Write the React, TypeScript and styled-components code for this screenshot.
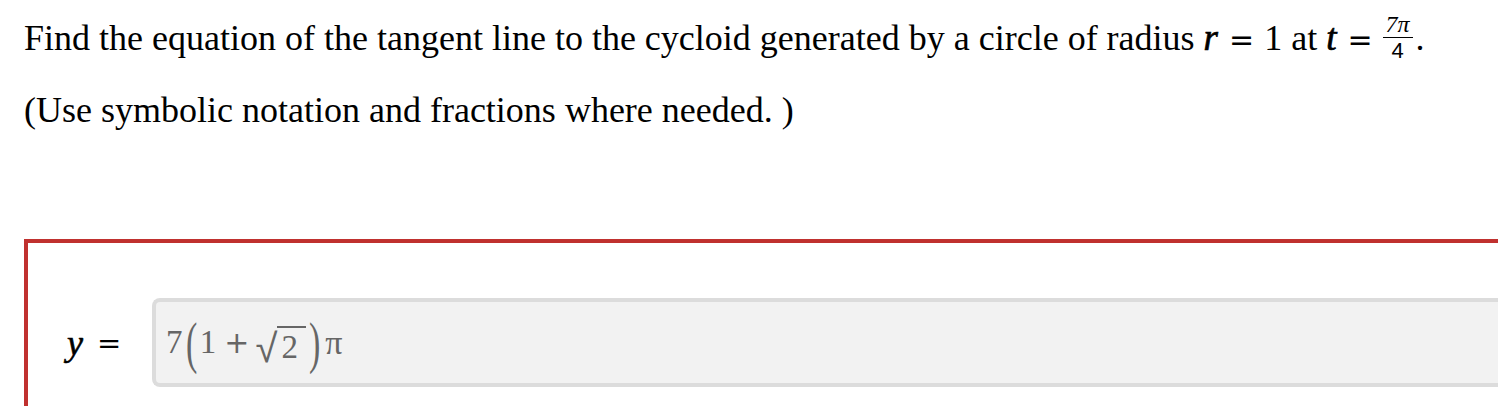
import React from 'react'
import styled, { createGlobalStyle } from 'styled-components'

const GlobalStyle = createGlobalStyle`
  html, body {
    margin: 0;
    padding: 0;
    background: #fff;
  }
  body {
    width: 1498px;
    height: 406px;
    overflow: hidden;
  }
`

const Page = styled.div`
  padding: 13px 0 0 24px;
  font-family: "Liberation Serif", "Times New Roman", serif;
  color: #000;
`

const Prompt = styled.p`
  margin: 0;
  font-size: 36px;
  line-height: 50px;
  white-space: nowrap;
`

const Hint = styled(Prompt)`
  margin-top: 20px;
`

const MathVar = styled.i`
  font-family: "Liberation Serif", serif;
  font-size: 37px;
  -webkit-text-stroke: 0.7px #000;
  margin-right: 2px;
`

const Eq = styled.span`
  font-family: "DejaVu Sans", sans-serif;
  font-size: 30px;
  margin: 0 10px 0 9px;
`

const Frac = styled.span`
  display: inline-flex;
  flex-direction: column;
  align-items: center;
  vertical-align: middle;
  font-family: "Liberation Sans", Arial, sans-serif;
  font-size: 22px;
  line-height: 20px;
  margin: -8px 3px 0 0;
`

const Num = styled.span`
  padding: 0 3px 3px;
  border-bottom: 1.5px solid #000;
  font-family: "Liberation Serif", serif;
  font-style: italic;
  font-size: 24px;
`

const Den = styled.span`
  padding-top: 3px;
`

const AnswerPanel = styled.section`
  margin-top: 104px;
  border-top: 4px solid #c0312f;
  border-left: 4px solid #c0312f;
  height: 169px;
  padding: 55px 0 0 37px;
  box-sizing: border-box;
`

const Row = styled.div`
  display: flex;
  align-items: center;
`

const Label = styled.span`
  display: flex;
  align-items: center;
  width: 87px;
  padding-left: 2px;
  box-sizing: border-box;
`

const LabelVar = styled.i`
  font-family: "Liberation Serif", serif;
  font-size: 36px;
  -webkit-text-stroke: 0.6px #000;
`

const LabelEq = styled.span`
  font-family: "DejaVu Sans", sans-serif;
  font-size: 29px;
  margin-left: 14px;
`

const InputBox = styled.div`
  flex: 1;
  height: 89px;
  box-sizing: border-box;
  border: 4px solid #dcdcdc;
  border-right: none;
  border-radius: 8px 0 0 8px;
  background: #f2f2f2;
  display: flex;
  align-items: center;
  padding-left: 10px;
  color: #666;
  font-family: "Liberation Serif", serif;
  font-size: 33px;
`

const Paren = styled.span`
  display: inline-block;
  font-family: "Liberation Serif", serif;
  font-size: 40px;
  transform: scaleY(1.45) scaleX(0.85);
  margin: 0 2px;
`

const Plus = styled.span`
  font-family: "DejaVu Sans", sans-serif;
  font-size: 30px;
  margin: 0 6px 0 8px;
`

const Radical = styled.span`
  display: inline-flex;
  align-items: flex-end;
`

const RadSign = styled.span`
  font-family: "DejaVu Sans", sans-serif;
  font-size: 40px;
  font-weight: 300;
  transform: translateY(5px);
`

const Radicand = styled.span`
  border-top: 2px solid #666;
  padding: 0 8px 0 4px;
  line-height: 38px;
`

const Pi = styled.span`
  font-family: "Liberation Serif", serif;
  font-size: 34px;
  margin-left: 2px;
`

export default function App() {
  return (
    <>
      <GlobalStyle />
      <Page>
        <Prompt>
          Find the equation of the tangent line to the cycloid generated by a circle of radius{' '}
          <MathVar>r</MathVar>
          <Eq>=</Eq>1 at <MathVar>t</MathVar>
          <Eq>=</Eq>
          <Frac>
            <Num>7π</Num>
            <Den>4</Den>
          </Frac>
          .
        </Prompt>
        <Hint>(Use symbolic notation and fractions where needed. )</Hint>
        <AnswerPanel>
          <Row>
            <Label>
              <LabelVar>y</LabelVar>
              <LabelEq>=</LabelEq>
            </Label>
            <InputBox>
              7<Paren>(</Paren>1<Plus>+</Plus>
              <Radical>
                <RadSign>√</RadSign>
                <Radicand>2</Radicand>
              </Radical>
              <Paren>)</Paren>
              <Pi>π</Pi>
            </InputBox>
          </Row>
        </AnswerPanel>
      </Page>
    </>
  )
}
